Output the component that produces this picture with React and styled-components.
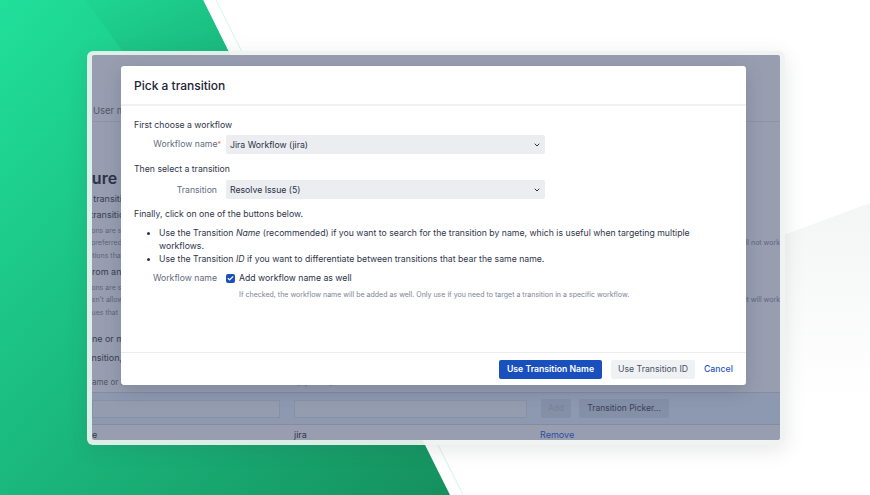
import React from "react";
import styled, { createGlobalStyle } from "styled-components";
import { ChevronDown, Check } from "lucide-react";

const GlobalStyle = createGlobalStyle`
  html, body {
    margin: 0;
    padding: 0;
    background: #fff;
    font-family: Inter, "Noto Sans", "Liberation Sans", sans-serif;
  }
`;

const Stage = styled.div`
  position: relative;
  width: 870px;
  height: 495px;
  overflow: hidden;
  background: #fff;
  padding: 51px 85px 50px 87px;
  box-sizing: border-box;
`;

const Backdrop = styled.svg`
  position: absolute;
  inset: 0;
`;

const Frame = styled.div`
  position: relative;
  height: 100%;
  padding: 4px 5px 5px;
  box-sizing: border-box;
  background: rgba(238, 243, 241, 0.92);
  border-radius: 6px;
  box-shadow: 0 5px 20px rgba(60, 70, 80, 0.13);
`;

const Screen = styled.div`
  position: relative;
  height: 100%;
  overflow: hidden;
  background: #989eb0;
  border-radius: 2px;
  color: #3b4358;
`;

const PageNav = styled.div`
  height: 67px;
  box-sizing: border-box;
  padding: 49px 0 0 1px;
  font-size: 9.5px;
  line-height: 14px;
  color: #4f566b;
  white-space: nowrap;
  border-bottom: 1px solid #8e94a6;
`;

const PageBody = styled.div`
  height: 270px;
  padding-top: 46px;
  box-sizing: border-box;
  white-space: nowrap;
`;

const PageTitle = styled.div`
  margin-left: -52px;
  font-size: 16px;
  font-weight: 600;
  line-height: 20px;
  color: #2b3247;
`;

const PageLine = styled.div`
  display: flex;
  justify-content: space-between;
  height: ${(p) => p.$h || 16}px;
  margin-top: ${(p) => p.$top || 0}px;
  margin-left: ${(p) => p.$left || 0}px;
  font-size: ${(p) => (p.$small ? 7 : 9)}px;
  line-height: ${(p) => p.$h || 16}px;
  color: ${(p) => (p.$small ? "#5e657a" : "#363d52")};
`;

const ColumnHeads = styled.div`
  display: grid;
  grid-template-columns: 202px 1fr;
  height: 12px;
  margin: 10px 0 0 -6px;
  font-size: 8px;
  line-height: 12px;
  color: #4f566b;
`;

const FormBand = styled.div`
  height: 31px;
  display: grid;
  grid-template-columns: 188px 233px 80px 90px;
  column-gap: 14px;
  align-items: center;
  background: #8d99b0;
  border-top: 1px solid #858ca0;
  border-bottom: 1px solid #858ca0;
  font-size: 8.5px;
  color: #3b4358;
`;

const GhostInput = styled.div`
  height: 18px;
  background: #939daf;
  border: 1px solid #8791a6;
  box-sizing: border-box;
`;

const GhostButtons = styled.div`
  display: flex;
  gap: 8px;
  align-items: center;
  grid-column: span 2;
`;

const GhostButton = styled.div`
  height: 19px;
  padding: 0 ${(p) => (p.$muted ? 7 : 8)}px;
  line-height: 19px;
  border-radius: 2px;
  background: #8490a6;
  color: ${(p) => (p.$muted ? "#78839a" : "#394159")};
`;

const ResultRow = styled.div`
  display: grid;
  grid-template-columns: 202px 246px 1fr;
  height: 18px;
  line-height: 20px;
  font-size: 9px;
  color: #30374c;
`;

const RowLink = styled.span`
  color: #2b4f9e;
`;

const Modal = styled.div`
  position: absolute;
  left: 29px;
  top: 11px;
  width: 625px;
  height: 319px;
  display: flex;
  flex-direction: column;
  background: #fff;
  border-radius: 3px;
  box-shadow: 0 6px 18px rgba(50, 60, 80, 0.22);
`;

const ModalHeader = styled.div`
  height: 40px;
  box-sizing: border-box;
  padding: 0 13px;
  display: flex;
  align-items: center;
  border-bottom: 2px solid #f0f1f3;
  font-size: 12px;
  font-weight: 500;
  color: #1c2437;
`;

const ModalBody = styled.div`
  flex: 1;
  padding: 13px 13px 0;
  font-size: 8.7px;
  line-height: 12px;
  color: #2f364a;
`;

const StepText = styled.div`
  height: 12px;
  margin-bottom: ${(p) => p.$bottom || 4}px;
`;

const FieldRow = styled.div`
  display: grid;
  grid-template-columns: 83px 319px;
  column-gap: 9px;
  align-items: center;
  margin-bottom: ${(p) => p.$bottom ?? 9}px;
`;

const FieldLabel = styled.div`
  text-align: right;
  color: #646c80;
`;

const Required = styled.span`
  margin-right: -4px;
  font-size: 7px;
  color: #e2674f;
`;

const SelectBox = styled.div`
  height: 19px;
  padding: 0 4px 0 4px;
  display: flex;
  align-items: center;
  justify-content: space-between;
  background: #ecedf1;
  border-radius: 2px;
  color: #2a3145;
`;

const Bullets = styled.ul`
  margin: 0 0 6px;
  padding: 0 40px 0 25px;
  line-height: 13px;

  li {
    padding: 0;
  }
`;

const CheckLine = styled.div`
  display: flex;
  align-items: center;
  gap: 4px;
  color: #2a3145;
`;

const CheckMark = styled.span`
  width: 9px;
  height: 9px;
  display: flex;
  align-items: center;
  justify-content: center;
  background: #1a50bd;
  border-radius: 2px;
  color: #fff;
`;

const HelpText = styled.div`
  margin: 6px 0 0 105px;
  font-size: 7.04px;
  line-height: 9px;
  color: #7d8496;
`;

const ModalFooter = styled.div`
  height: 33px;
  box-sizing: border-box;
  padding: 0 13px 0 0;
  display: flex;
  align-items: center;
  justify-content: flex-end;
  gap: 9px;
  border-top: 1px solid #ececef;
  font-size: 8.7px;
`;

const Button = styled.button`
  height: 19px;
  padding: 0;
  width: ${(p) => p.$width}px;
  border: 0;
  border-radius: 2px;
  font: inherit;
  font-weight: ${(p) => (p.$primary ? 600 : 400)};
  color: ${(p) => (p.$primary ? "#fff" : "#4a5166")};
  background: ${(p) => (p.$primary ? "#1a50bd" : "#f0f1f3")};
`;

const LinkButton = styled.a`
  display: block;
  width: 29px;
  font-weight: 500;
  color: #1f55c4;
`;

export default function App() {
  return (
    <Stage>
      <GlobalStyle />
      <Backdrop width="870" height="495" viewBox="0 0 870 495">
        <defs>
          <linearGradient id="green" x1="0" y1="0" x2="1" y2="1">
            <stop offset="0" stopColor="#20e09a" />
            <stop offset="1" stopColor="#15905f" />
          </linearGradient>
          <linearGradient id="greenDark" x1="0" y1="0" x2="1" y2="1">
            <stop offset="0" stopColor="#1fd591" />
            <stop offset="1" stopColor="#19b27a" />
          </linearGradient>
          <linearGradient id="grey" x1="0" y1="0" x2="0" y2="1">
            <stop offset="0" stopColor="#f4f5f5" />
            <stop offset="0.75" stopColor="#ffffff" />
          </linearGradient>
        </defs>
        <polygon points="0,0 203,0 450,495 0,495" fill="url(#green)" />
        <polygon points="85,0 203,0 240,75 140,75" fill="url(#greenDark)" />
        <line x1="216" y1="0" x2="463" y2="495" stroke="#a5ecd3" strokeWidth="0.5" />
        <polygon points="700,266 870,203 870,470 700,470" fill="url(#grey)" />
      </Backdrop>
      <Frame>
        <Screen>
          <PageNav>User management</PageNav>
          <PageBody>
            <PageTitle>Configure Transitions</PageTitle>
            <PageLine $top={3} $left={-18}>Use transition names</PageLine>
            <PageLine $left={-21}>Use transition IDs</PageLine>
            <PageLine $small $top={2} $left={-25} $h={12}>Transitions are s</PageLine>
            <PageLine $small $left={-1} $h={12}>
              <span>preferred</span>
              <span>will not work</span>
            </PageLine>
            <PageLine $small $left={-18} $h={13}>transitions that</PageLine>
            <PageLine $left={-5} $top={2}>From and to</PageLine>
            <PageLine $small $top={2} $left={-25} $h={12}>Transitions are s</PageLine>
            <PageLine $small $left={-2} $h={12}>
              <span>isn't allowed</span>
              <span>it will work</span>
            </PageLine>
            <PageLine $small $left={-10} $h={13}>values that</PageLine>
            <PageLine $left={-7} $top={11} $h={18}>One or more</PageLine>
            <PageLine $left={-12} $top={2}>transition, and</PageLine>
            <ColumnHeads>
              <span>Name or ID</span>
              <span>Id (optional)</span>
            </ColumnHeads>
          </PageBody>
          <FormBand>
            <GhostInput />
            <GhostInput />
            <GhostButtons>
              <GhostButton $muted>Add</GhostButton>
              <GhostButton>Transition Picker...</GhostButton>
            </GhostButtons>
          </FormBand>
          <ResultRow>
            <span>e</span>
            <span>jira</span>
            <RowLink>Remove</RowLink>
          </ResultRow>
          <Modal>
            <ModalHeader>Pick a transition</ModalHeader>
            <ModalBody>
              <StepText>First choose a workflow</StepText>
              <FieldRow>
                <FieldLabel>
                  Workflow name<Required>*</Required>
                </FieldLabel>
                <SelectBox>
                  Jira Workflow (jira)
                  <ChevronDown size={8} strokeWidth={3} />
                </SelectBox>
              </FieldRow>
              <StepText $bottom={5}>Then select a transition</StepText>
              <FieldRow $bottom={9}>
                <FieldLabel>Transition</FieldLabel>
                <SelectBox>
                  Resolve Issue (5)
                  <ChevronDown size={8} strokeWidth={3} />
                </SelectBox>
              </FieldRow>
              <StepText $bottom={7}>Finally, click on one of the buttons below.</StepText>
              <Bullets>
                <li>
                  Use the Transition <em>Name</em> (recommended) if you want to search for the
                  transition by name, which is useful when targeting multiple workflows.
                </li>
                <li>
                  Use the Transition <em>ID</em> if you want to differentiate between transitions
                  that bear the same name.
                </li>
              </Bullets>
              <FieldRow $bottom={0}>
                <FieldLabel>Workflow name</FieldLabel>
                <CheckLine>
                  <CheckMark>
                    <Check size={7} strokeWidth={4} />
                  </CheckMark>
                  Add workflow name as well
                </CheckLine>
              </FieldRow>
              <HelpText>
                If checked, the workflow name will be added as well. Only use if you need to target
                a transition in a specific workflow.
              </HelpText>
            </ModalBody>
            <ModalFooter>
              <Button $primary $width={103}>Use Transition Name</Button>
              <Button $width={84}>Use Transition ID</Button>
              <LinkButton>Cancel</LinkButton>
            </ModalFooter>
          </Modal>
        </Screen>
      </Frame>
    </Stage>
  );
}
